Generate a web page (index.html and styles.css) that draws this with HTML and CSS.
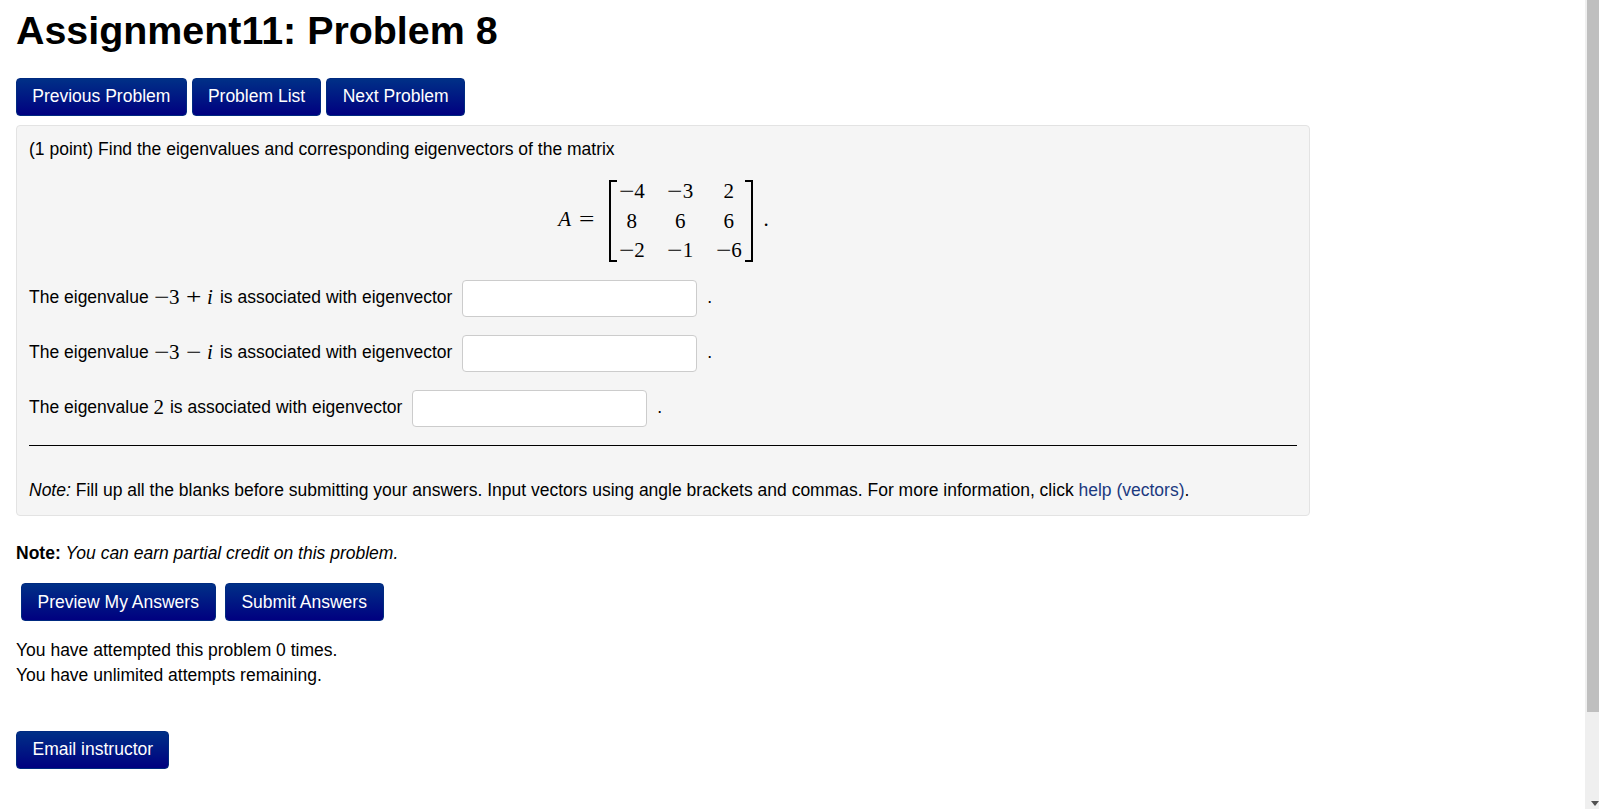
FILE: index.html
```html
<!DOCTYPE html>
<html lang="en">
<head>
<meta charset="utf-8">
<title>Assignment11: Problem 8</title>
<link rel="stylesheet" href="styles.css">
</head>
<body>
<main class="page">
  <h1 class="title">Assignment11: Problem 8</h1>
  <nav class="nav">
    <a class="btn">Previous Problem</a>
    <a class="btn">Problem List</a>
    <a class="btn">Next Problem</a>
  </nav>
  <section class="problem">
    <p class="intro">(1 point) Find the eigenvalues and corresponding eigenvectors of the matrix</p>
    <div class="display">
      <span class="m eqn"><i>A</i><span class="op rel">=</span></span>
      <div class="matrix">
        <span class="cell"><span class="op">−</span>4</span><span class="cell"><span class="op">−</span>3</span><span class="cell">2</span>
        <span class="cell">8</span><span class="cell">6</span><span class="cell">6</span>
        <span class="cell"><span class="op">−</span>2</span><span class="cell"><span class="op">−</span>1</span><span class="cell"><span class="op">−</span>6</span>
      </div>
      <span class="m eqn">.</span>
    </div>
    <div class="answer">The eigenvalue <span class="m"><span class="op">−</span>3<span class="op bin">+</span><i class="var">i</i></span> is associated with eigenvector <input class="field" type="text"><span class="period">.</span></div>
    <div class="answer">The eigenvalue <span class="m"><span class="op">−</span>3<span class="op bin">−</span><i class="var">i</i></span> is associated with eigenvector <input class="field" type="text"><span class="period">.</span></div>
    <div class="answer">The eigenvalue <span class="m">2</span> is associated with eigenvector <input class="field" type="text"><span class="period">.</span></div>
    <hr class="rule">
    <p class="hint"><em>Note:</em> Fill up all the blanks before submitting your answers. Input vectors using angle brackets and commas. For more information, click <a class="link">help (vectors)</a>.</p>
  </section>
  <p class="credit"><b>Note:</b> <em>You can earn partial credit on this problem.</em></p>
  <div class="actions">
    <button class="btn" type="button">Preview My Answers</button>
    <button class="btn" type="button">Submit Answers</button>
  </div>
  <p class="attempts">You have attempted this problem 0 times.<br>You have unlimited attempts remaining.</p>
  <a class="btn email">Email instructor</a>
</main>
<div class="scrollbar" aria-hidden="true">
  <div class="thumb"></div>
  <svg class="arrow" width="8" height="6" viewBox="0 0 8 6"><path d="M0 0H8L4 5Z" fill="#505050"/></svg>
</div>
</body>
</html>
```
FILE: styles.css
```css
html, body { margin: 0; padding: 0; background: #fff; height: 100%; overflow: hidden; }
body { font-family: "Liberation Sans", Arial, sans-serif; font-size: 17.5px; color: #000; line-height: 25px; }
.page { padding: 0 0 0 16px; width: 1294px; }
.title { margin: 0; padding-top: 10px; font-size: 39.4px; line-height: 40px; font-weight: bold; height: 68px; }
.nav { display: flex; gap: 5px; height: 38px; }
.nav .btn { padding: 0 15.25px; }
.btn {
  display: inline-block; box-sizing: border-box; height: 38px; padding: 0 15.5px;
  border: 1px solid #002a80; border-radius: 4px; color: #fff; font: inherit; line-height: 34px;
  background: linear-gradient(to bottom, #003087, #000080);
}
.problem {
  box-sizing: border-box; margin-top: 9px; padding: 0 12px; height: 391px;
  background: #f5f5f5; border: 1px solid #e3e3e3; border-radius: 4px;
}
.intro { margin: 0; padding-top: 11px; height: 43px; }
.m { font-family: "Liberation Serif", "Times New Roman", serif; font-size: 21px; margin-right: 1px; }
.op { display: inline-block; width: 15.5px; text-align: center; transform: scaleX(1.3); }
.bin { margin: 0 6px; }
.var { display: inline-block; width: 7px; }
.rel { margin-left: 8px; }
.display { display: flex; justify-content: center; align-items: flex-start; height: 90px; padding-left: 2px; }
.eqn { line-height: 78px; }
.matrix {
  display: grid; grid-template-columns: repeat(3, 26.5px); grid-template-rows: 22px 38px 19px; column-gap: 22px;
  align-items: center; box-sizing: border-box; height: 82px; margin: 0 11px 0 13px; padding: 0 8.5px 0 8px;
  font-family: "Liberation Serif", "Times New Roman", serif; font-size: 21px; line-height: 20px;
  border-left: 2px solid #000; border-right: 2px solid #000; position: relative;
}
.matrix::before, .matrix::after { content: ""; position: absolute; top: 0; bottom: 0; width: 6px; border-top: 2px solid #000; border-bottom: 2px solid #000; }
.matrix::before { left: 0; }
.matrix::after { right: 0; }
.cell { text-align: center; white-space: nowrap; }
.answer { height: 55px; display: flex; align-items: center; white-space: pre; }
.field {
  box-sizing: border-box; width: 235px; height: 37px; margin: 2px 0 0 5px; padding: 4px;
  background: #fff; border: 1px solid #ccc; border-radius: 4px;
}
.period { margin-left: 10px; }
.rule { margin: 10px 0 0; border: 0; border-top: 1px solid #000; }
.hint { margin: 0; padding-top: 32px; }
.link { color: #1c3a80; }
.credit { margin: 25px 0 0; }
.actions { display: flex; gap: 9px; margin: 17px 0 0 5px; }
.actions .btn { padding: 0 16px 0 15.5px; }
.attempts { margin: 17px 0 0; }
.email { margin-top: 43px; padding: 0 15px 0 15.5px; }
.scrollbar { position: fixed; top: 0; right: 0; bottom: 0; width: 14px; background: #efefef; }
.thumb { position: absolute; top: 0; left: 2px; right: 0; height: 712px; background: #bfbfbf; }
.arrow { position: absolute; left: 6px; bottom: 2px; }
```
